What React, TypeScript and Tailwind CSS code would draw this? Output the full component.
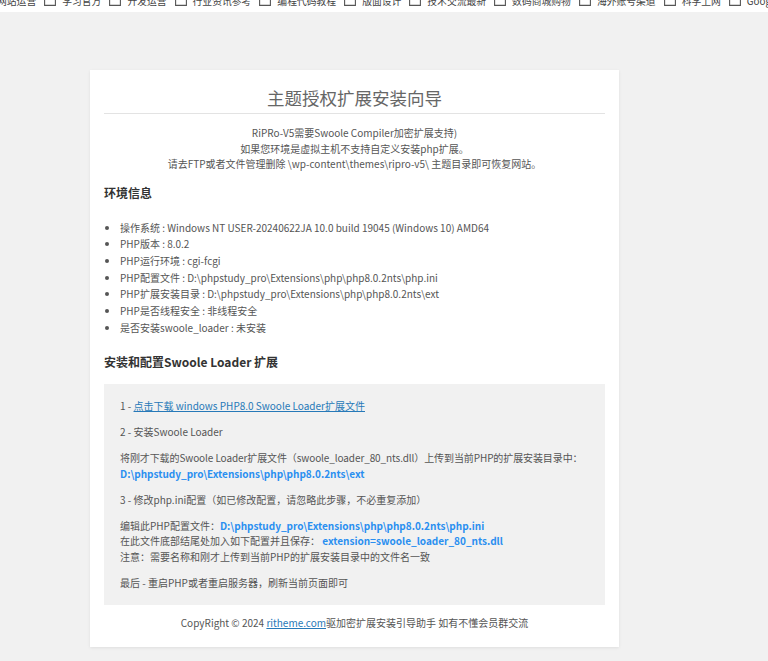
import React from "react";

const bookmarks = [
  "网站运营",
  "学习官方",
  "开发运营",
  "行业资讯参考",
  "编程代码教程",
  "版面设计",
  "技术交流最新",
  "数码商城购物",
  "海外账号渠道",
  "科学上网",
  "Google",
];

const envInfo = [
  "操作系统 : Windows NT USER-20240622JA 10.0 build 19045 (Windows 10) AMD64",
  "PHP版本 : 8.0.2",
  "PHP运行环境 : cgi-fcgi",
  "PHP配置文件 : D:\\phpstudy_pro\\Extensions\\php\\php8.0.2nts\\php.ini",
  "PHP扩展安装目录 : D:\\phpstudy_pro\\Extensions\\php\\php8.0.2nts\\ext",
  "PHP是否线程安全 : 非线程安全",
  "是否安装swoole_loader : 未安装",
];

const FolderIcon = () => (
  <svg className="w-[12px] h-[10px] text-[#555] shrink-0" viewBox="0 0 12 10" fill="none" stroke="currentColor" strokeWidth={1.1}>
    <path d="M0.6 0.6h3.8l1.1 1.4h5.9v7.4H0.6z" />
  </svg>
);

const App: React.FC = () => {
  return (
    <div
      className="min-h-[661px] bg-[#f1f1f1] text-[#555] text-[10px]"
      style={{ fontFamily: '"Noto Sans CJK SC", "Noto Sans", sans-serif' }}
    >
      {/* clipped bookmark bar */}
      <div className="h-[12px] bg-white overflow-hidden">
        <div className="flex items-center gap-[8px] -mt-[6px] -ml-[3px] whitespace-nowrap text-[9.8px] text-[#444]">
          {bookmarks.map((b, i) => (
            <div key={b} className="flex items-center gap-[6px]">
              {i > 0 && <FolderIcon />}
              <span>{b}</span>
            </div>
          ))}
        </div>
      </div>

      <div className="pt-[58px] pb-[13px]">
        <div className="w-[529px] ml-[90px] bg-white shadow-[0_1px_3px_rgba(0,0,0,0.08)] px-[14px] pt-[14px] pb-[14px]">
          <h1 className="text-center text-[17.5px] text-[#666] leading-[27px] pb-[2px] border-b border-[#e3e3e3]">
            主题授权扩展安装向导
          </h1>

          <div className="text-center leading-[15.5px] mt-[11px]">
            <p>RiPRo-V5需要Swoole Compiler加密扩展支持)</p>
            <p>如果您环境是虚拟主机不支持自定义安装php扩展。</p>
            <p>请去FTP或者文件管理删除 \wp-content\themes\ripro-v5\ 主题目录即可恢复网站。</p>
          </div>

          <h2 className="mt-[12px] text-[12px] font-bold text-[#333] leading-[18px]">环境信息</h2>

          <ul className="mt-[18px] list-disc pl-[16px] leading-[16.7px] marker:text-[#555]">
            {envInfo.map((t) => (
              <li key={t}>{t}</li>
            ))}
          </ul>

          <h2 className="mt-[17px] text-[12px] font-bold text-[#333] leading-[18px]">安装和配置Swoole Loader 扩展</h2>

          <div className="mt-[13px] bg-[#f1f1f1] px-[16px] pt-[14px] pb-[15px] leading-[15.5px] flex flex-col gap-[10.5px]">
            <p>
              1 -{" "}
              <a href="#" className="text-[#2779b8] underline">
                点击下载 windows PHP8.0 Swoole Loader扩展文件
              </a>
            </p>
            <p>2 - 安装Swoole Loader</p>
            <p>
              <span className="whitespace-nowrap tracking-[-0.1px]">
                将刚才下载的Swoole Loader扩展文件（swoole_loader_80_nts.dll）上传到当前PHP的扩展安装目录中：
              </span>
              <br />
              <b className="text-[#2a8ff0]">D:\phpstudy_pro\Extensions\php\php8.0.2nts\ext</b>
            </p>
            <p>3 - 修改php.ini配置（如已修改配置，请忽略此步骤，不必重复添加）</p>
            <p>
              编辑此PHP配置文件：<b className="text-[#2a8ff0]">D:\phpstudy_pro\Extensions\php\php8.0.2nts\php.ini</b>
              <br />
              在此文件底部结尾处加入如下配置并且保存： <b className="text-[#2a8ff0]">extension=swoole_loader_80_nts.dll</b>
              <br />
              注意：需要名称和刚才上传到当前PHP的扩展安装目录中的文件名一致
            </p>
            <p>最后 - 重启PHP或者重启服务器，刷新当前页面即可</p>
          </div>

          <p className="text-center mt-[10px] mb-[3px] leading-[15px]">
            CopyRight © 2024{" "}
            <a href="#" className="text-[#2779b8] underline">
              ritheme.com
            </a>
            驱加密扩展安装引导助手 如有不懂会员群交流
          </p>
        </div>
      </div>
    </div>
  );
};

export default App;
